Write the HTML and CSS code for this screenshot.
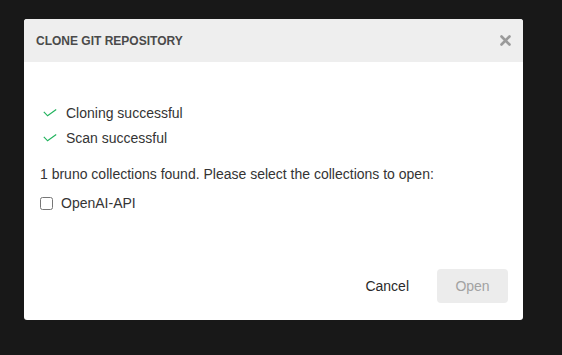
FILE: index.html
```html
<!DOCTYPE html>
<html lang="en">
<head>
    <meta charset="UTF-8">
    <title>Clone Git Repository</title>
    <link rel="stylesheet" href="styles.css">
</head>
<body>
    <div class="modal">
        <div class="modal-header">
            <span class="modal-title">CLONE GIT REPOSITORY</span>
            <svg class="close" width="11" height="11" viewBox="0 0 11 11">
                <path d="M1.5 1.5L9.5 9.5M9.5 1.5L1.5 9.5" stroke="#9a9a9a" stroke-width="2.6" stroke-linecap="round" fill="none"/>
            </svg>
        </div>
        <div class="modal-body">
            <div class="status">
                <svg class="check" width="14" height="8" viewBox="0 0 14 8">
                    <path d="M0.8 2.8L4.6 6.8L13.2 0.6" stroke="#22b35e" stroke-width="1.2" fill="none"/>
                </svg>
                <span>Cloning successful</span>
            </div>
            <div class="status">
                <svg class="check" width="14" height="8" viewBox="0 0 14 8">
                    <path d="M0.8 2.8L4.6 6.8L13.2 0.6" stroke="#22b35e" stroke-width="1.2" fill="none"/>
                </svg>
                <span>Scan successful</span>
            </div>
            <p class="found">1 bruno collections found. Please select the collections to open:</p>
            <label class="collection">
                <input type="checkbox" name="collection" value="OpenAI-API">
                <span>OpenAI-API</span>
            </label>
            <div class="modal-footer">
                <button class="btn btn-cancel">Cancel</button>
                <button class="btn btn-open" disabled>Open</button>
            </div>
        </div>
    </div>
</body>
</html>
```

FILE: styles.css
```css
body {
    margin: 0;
    padding: 19px 0 0 24px;
    background-color: #181818;
    font-family: "Liberation Sans", Arial, sans-serif;
    color: #343434;
    height: 355px;
    box-sizing: border-box;
}
.modal {
    width: 499px;
    height: 301px;
    background-color: #fff;
    border-radius: 3px;
    overflow: hidden;
    display: flex;
    flex-direction: column;
}
.modal-header {
    height: 43px;
    flex-shrink: 0;
    background-color: #eeeeee;
    display: flex;
    align-items: center;
    justify-content: space-between;
    padding: 0 12px;
}
.modal-title {
    font-size: 12px;
    font-weight: bold;
    color: #4a4a4a;
}
.modal-body {
    flex: 1;
    display: flex;
    flex-direction: column;
    padding: 38px 15px 17px 16px;
    font-size: 14px;
}
.status {
    display: flex;
    align-items: center;
    height: 25px;
}
.check {
    margin: 0 9px 0 3px;
}
.found {
    margin: 14px 0 0;
    line-height: 20px;
}
.collection {
    display: flex;
    align-items: center;
    margin-top: 9px;
    height: 20px;
}
.collection input {
    margin: 0 8px 0 0;
    width: 13px;
    height: 13px;
}
.modal-footer {
    margin-top: auto;
    display: flex;
    justify-content: flex-end;
    align-items: center;
    gap: 14px;
}
.btn {
    font-family: inherit;
    font-size: 14px;
    border: none;
    border-radius: 4px;
    height: 34px;
    padding: 0 14px;
}
.btn-cancel {
    background: none;
    color: #2a2a2a;
}
.btn-open {
    width: 71px;
    background-color: #ececec;
    color: #a2a2a2;
}
```
